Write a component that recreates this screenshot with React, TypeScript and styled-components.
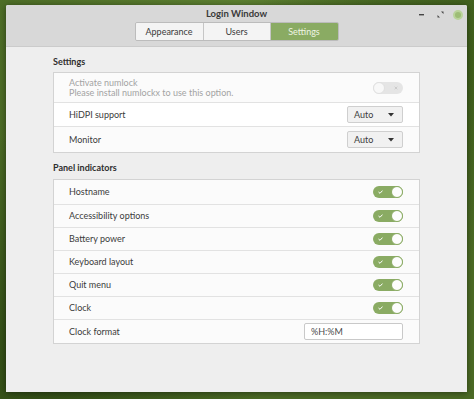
import React from 'react';
import styled, { createGlobalStyle } from 'styled-components';

const GlobalStyle = createGlobalStyle`
  html, body {
    margin: 0;
    padding: 0;
  }
  body {
    width: 474px;
    height: 399px;
    overflow: hidden;
    font-family: Lato, "Noto Sans", "DejaVu Sans", sans-serif;
    background:
      radial-gradient(circle at 8% 90%, #2f4a14 0, transparent 40%),
      radial-gradient(circle at 95% 15%, #3d5c1b 0, transparent 35%),
      radial-gradient(circle at 50% 0%, #5c7f30 0, transparent 60%),
      #4b6a25;
  }
`;

const Desktop = styled.div`
  box-sizing: border-box;
  height: 399px;
  padding: 5px 7px 7px 6px;
`;

const Window = styled.div`
  display: flex;
  flex-direction: column;
  width: 461px;
  height: 387px;
  background: #eeeeee;
  box-shadow: 0 1px 6px rgba(0, 0, 0, 0.45);
  border-radius: 2px 2px 0 0;
  overflow: hidden;
`;

const Header = styled.div`
  display: flex;
  flex-direction: column;
  align-items: center;
  height: 42px;
  box-sizing: border-box;
  padding-bottom: 5px;
  background: #d8d8d8;
  border-bottom: 1px solid #cbcbcb;
`;

const TitleRow = styled.div`
  display: grid;
  grid-template-columns: 1fr auto 1fr;
  align-items: center;
  width: 100%;
  height: 17px;
`;

const Title = styled.div`
  grid-column: 2;
  font-size: 9.5px;
  font-weight: 700;
  color: #3a3a3a;
  line-height: 17px;
`;

const Controls = styled.div`
  justify-self: end;
  display: flex;
  align-items: center;
  gap: 8px;
  padding: 2px 4px 0 0;
`;

const ControlButton = styled.div`
  display: flex;
  align-items: center;
  justify-content: center;
  width: 10px;
  height: 10px;
`;

const CloseButton = styled(ControlButton)`
  box-sizing: border-box;
  border-radius: 50%;
  background: #9dbd75;
  border: 2px solid #b9d39a;
`;

const Tabs = styled.div`
  display: flex;
  height: 20px;
  box-sizing: border-box;
  border: 1px solid #bcbcbc;
  border-radius: 2px;
  overflow: hidden;
`;

const Tab = styled.div<{ $active?: boolean; $w: number }>`
  display: flex;
  align-items: center;
  justify-content: center;
  width: ${(p) => p.$w}px;
  font-size: 9px;
  color: ${(p) => (p.$active ? '#eef4e4' : '#3a3a3a')};
  background: ${(p) => (p.$active ? '#8aab63' : '#f4f4f4')};
  & + & {
    border-left: 1px solid #c6c6c6;
  }
`;

const Content = styled.div`
  display: flex;
  flex-direction: column;
  padding: 6px 0 0 47px;
`;

const SectionTitle = styled.div<{ $top?: number }>`
  height: 17px;
  line-height: 17px;
  margin-top: ${(p) => p.$top || 0}px;
  margin-bottom: ${(p) => (p.$top ? 3 : 2)}px;
  font-size: 9px;
  font-weight: 700;
  color: #2f2f2f;
`;

const Frame = styled.div`
  width: 367px;
  box-sizing: border-box;
  border: 1px solid #d3d3d3;
  background: #fbfbfb;
`;

const Row = styled.div<{ $h: number; $hover?: boolean }>`
  display: flex;
  align-items: center;
  justify-content: space-between;
  box-sizing: border-box;
  height: ${(p) => p.$h}px;
  padding: 0 16px 0 15px;
  background: ${(p) => (p.$hover ? '#ffffff' : 'transparent')};
  & + & {
    border-top: 1px solid #e2e2e2;
  }
`;

const Label = styled.div<{ $disabled?: boolean }>`
  font-size: 9px;
  line-height: 10px;
  color: ${(p) => (p.$disabled ? '#a3a3a3' : '#3c3c3c')};
`;

const Switch = styled.div<{ $on: boolean }>`
  display: flex;
  align-items: center;
  justify-content: space-between;
  flex-direction: ${(p) => (p.$on ? 'row' : 'row-reverse')};
  width: 30px;
  height: 12px;
  box-sizing: border-box;
  border-radius: 6px;
  padding-left: ${(p) => (p.$on ? 5 : 0)}px;
  padding-right: ${(p) => (p.$on ? 0 : 5)}px;
  background: ${(p) => (p.$on ? '#8aab63' : '#e5e5e5')};
`;

const Knob = styled.div<{ $on: boolean }>`
  width: 12px;
  height: 12px;
  box-sizing: border-box;
  border-radius: 50%;
  background: ${(p) => (p.$on ? '#fdfdfd' : '#f8f8f8')};
  border: 1px solid ${(p) => (p.$on ? '#8aab63' : '#e0e0e0')};
`;

const Dropdown = styled.div`
  display: flex;
  align-items: center;
  justify-content: space-between;
  width: 56px;
  height: 17px;
  box-sizing: border-box;
  padding: 0 8px 0 6px;
  border: 1px solid #cfcfcf;
  border-radius: 2px;
  background: #f1f1f1;
  font-size: 9px;
  color: #3c3c3c;
`;

const Entry = styled.input`
  width: 99px;
  height: 17px;
  box-sizing: border-box;
  padding: 0 6px;
  border: 1px solid #c9c9c9;
  border-radius: 2px;
  background: #ffffff;
  font-family: inherit;
  font-size: 9px;
  color: #4a4a4a;
  outline: none;
`;

const Toggle: React.FC<{ on: boolean }> = ({ on }) => (
  <Switch $on={on}>
    {on ? (
      <svg width="5" height="4" viewBox="0 0 5 4">
        <path d="M0.5 2 L2 3.3 L4.5 0.6" stroke="#fff" strokeWidth="1" fill="none" />
      </svg>
    ) : (
      <svg width="4" height="4" viewBox="0 0 4 4">
        <path d="M0.7 0.7 L3.3 3.3 M3.3 0.7 L0.7 3.3" stroke="#c4c4c4" strokeWidth="0.8" />
      </svg>
    )}
    <Knob $on={on} />
  </Switch>
);

const Select: React.FC<{ value: string }> = ({ value }) => (
  <Dropdown>
    {value}
    <svg width="6" height="4" viewBox="0 0 6 4">
      <path d="M0 0 H6 L3 3.5 Z" fill="#333" />
    </svg>
  </Dropdown>
);

const indicators = [
  'Hostname',
  'Accessibility options',
  'Battery power',
  'Keyboard layout',
  'Quit menu',
  'Clock',
];

const App: React.FC = () => {
  return (
    <Desktop>
      <GlobalStyle />
      <Window>
        <Header>
          <TitleRow>
            <Title>Login Window</Title>
            <Controls>
              <ControlButton>
                <svg width="6" height="2" viewBox="0 0 6 2">
                  <rect x="0" y="0" width="5" height="1.4" fill="#444" />
                </svg>
              </ControlButton>
              <ControlButton>
                <svg width="7" height="7" viewBox="0 0 7 7">
                  <path d="M4 0.5 H6.5 V3 Z M3 6.5 H0.5 V4 Z" fill="#444" />
                </svg>
              </ControlButton>
              <CloseButton />
            </Controls>
          </TitleRow>
          <Tabs>
            <Tab $w={67}>Appearance</Tab>
            <Tab $w={66}>Users</Tab>
            <Tab $w={67} $active>
              Settings
            </Tab>
          </Tabs>
        </Header>
        <Content>
          <SectionTitle>Settings</SectionTitle>
          <Frame>
            <Row $h={29}>
              <Label $disabled>
                Activate numlock
                <br />
                Please install numlockx to use this option.
              </Label>
              <Toggle on={false} />
            </Row>
            <Row $h={24} $hover>
              <Label>HiDPI support</Label>
              <Select value="Auto" />
            </Row>
            <Row $h={26}>
              <Label>Monitor</Label>
              <Select value="Auto" />
            </Row>
          </Frame>
          <SectionTitle $top={6}>Panel indicators</SectionTitle>
          <Frame>
            {indicators.map((name, index) => (
              <Row key={index} $h={index === 0 ? 24 : 23}>
                <Label>{name}</Label>
                <Toggle on />
              </Row>
            ))}
            <Row $h={24}>
              <Label>Clock format</Label>
              <Entry defaultValue="%H:%M" />
            </Row>
          </Frame>
        </Content>
      </Window>
    </Desktop>
  );
};

export default App;
